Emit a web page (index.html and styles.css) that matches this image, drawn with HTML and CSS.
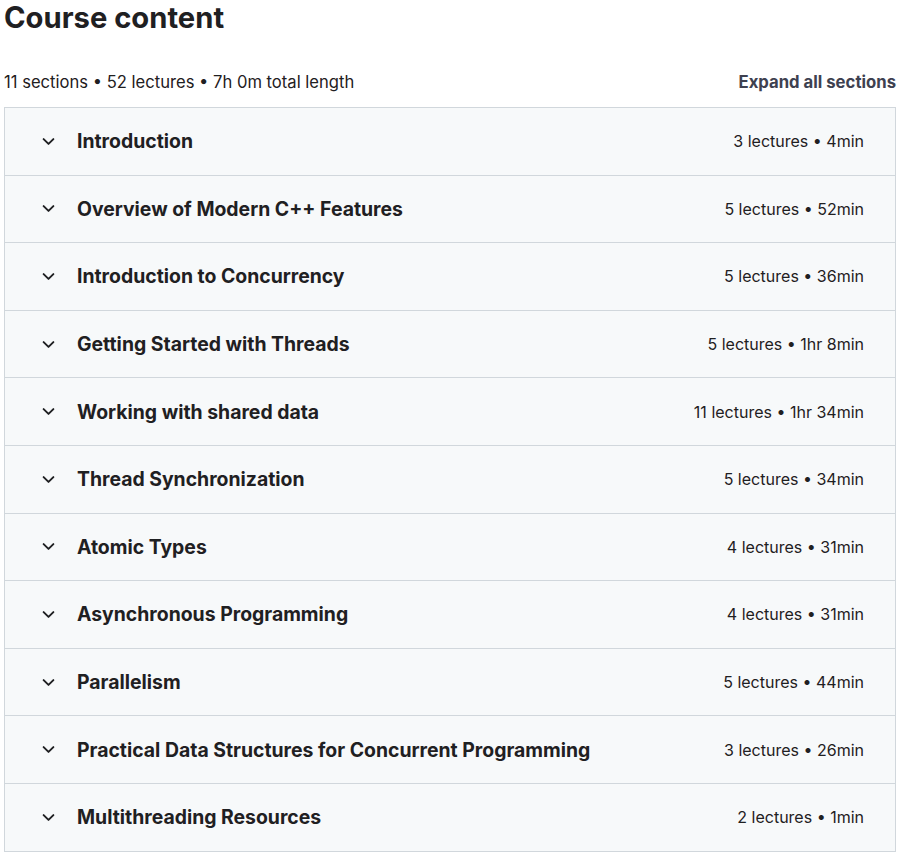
FILE: index.html
```html
<!DOCTYPE html>
<html>
<head>
<meta charset="utf-8">
<link rel="stylesheet" href="styles.css">
</head>
<body>
<div class="page">
  <h2 class="title">Course content</h2>
  <div class="summary">
    <span class="stats">11 sections • 52 lectures • 7h 0m total length</span>
    <span class="expand">Expand all sections</span>
  </div>
  <div class="sections">
    <div class="section"><svg class="chev" viewBox="0 0 12 8"><path d="M1.5 1.8 L6 6.2 L10.5 1.8" /></svg><span class="name">Introduction</span><span class="meta">3 lectures • 4min</span></div>
    <div class="section"><svg class="chev" viewBox="0 0 12 8"><path d="M1.5 1.8 L6 6.2 L10.5 1.8" /></svg><span class="name">Overview of Modern C++ Features</span><span class="meta">5 lectures • 52min</span></div>
    <div class="section"><svg class="chev" viewBox="0 0 12 8"><path d="M1.5 1.8 L6 6.2 L10.5 1.8" /></svg><span class="name">Introduction to Concurrency</span><span class="meta">5 lectures • 36min</span></div>
    <div class="section"><svg class="chev" viewBox="0 0 12 8"><path d="M1.5 1.8 L6 6.2 L10.5 1.8" /></svg><span class="name">Getting Started with Threads</span><span class="meta">5 lectures • 1hr 8min</span></div>
    <div class="section"><svg class="chev" viewBox="0 0 12 8"><path d="M1.5 1.8 L6 6.2 L10.5 1.8" /></svg><span class="name">Working with shared data</span><span class="meta">11 lectures • 1hr 34min</span></div>
    <div class="section"><svg class="chev" viewBox="0 0 12 8"><path d="M1.5 1.8 L6 6.2 L10.5 1.8" /></svg><span class="name">Thread Synchronization</span><span class="meta">5 lectures • 34min</span></div>
    <div class="section"><svg class="chev" viewBox="0 0 12 8"><path d="M1.5 1.8 L6 6.2 L10.5 1.8" /></svg><span class="name">Atomic Types</span><span class="meta">4 lectures • 31min</span></div>
    <div class="section"><svg class="chev" viewBox="0 0 12 8"><path d="M1.5 1.8 L6 6.2 L10.5 1.8" /></svg><span class="name">Asynchronous Programming</span><span class="meta">4 lectures • 31min</span></div>
    <div class="section"><svg class="chev" viewBox="0 0 12 8"><path d="M1.5 1.8 L6 6.2 L10.5 1.8" /></svg><span class="name">Parallelism</span><span class="meta">5 lectures • 44min</span></div>
    <div class="section"><svg class="chev" viewBox="0 0 12 8"><path d="M1.5 1.8 L6 6.2 L10.5 1.8" /></svg><span class="name">Practical Data Structures for Concurrent Programming</span><span class="meta">3 lectures • 26min</span></div>
    <div class="section"><svg class="chev" viewBox="0 0 12 8"><path d="M1.5 1.8 L6 6.2 L10.5 1.8" /></svg><span class="name">Multithreading Resources</span><span class="meta">2 lectures • 1min</span></div>
  </div>
</div>
</body>
</html>
```
FILE: styles.css
```css
* { box-sizing: border-box; }
html, body { margin: 0; padding: 0; background: #ffffff; }
body {
  font-family: Inter, "Noto Sans", "Liberation Sans", sans-serif;
  color: #1f2022;
}
.page {
  width: 892px;
  margin-left: 4px;
}
.title {
  margin: 0;
  font-size: 29.2px;
  font-weight: 700;
  line-height: 36px;
  letter-spacing: 0;
}
.summary {
  display: flex;
  justify-content: space-between;
  align-items: center;
  margin-top: 34px;
  height: 24px;
  margin-bottom: 13px;
}
.stats {
  font-size: 16.6px;
}
.expand {
  font-size: 16.7px;
  font-weight: 700;
  color: #3e4150;
}
.sections {
  border: 1px solid #d1d7dc;
  border-top: none;
}
.section {
  display: flex;
  align-items: center;
  height: 67.6px;
  border-top: 1px solid #d1d7dc;
  background: #f7f9fa;
  padding: 0 31px 0 37px;
}
.chev {
  width: 13px;
  height: 9px;
  flex: none;
  fill: none;
  stroke: #1f2022;
  stroke-width: 1.8;
  stroke-linecap: round;
  stroke-linejoin: round;
  margin-right: 22px;
}
.name {
  flex: 1;
  font-size: 19.4px;
  font-weight: 700;
}
.meta {
  font-size: 16px;
}
```
